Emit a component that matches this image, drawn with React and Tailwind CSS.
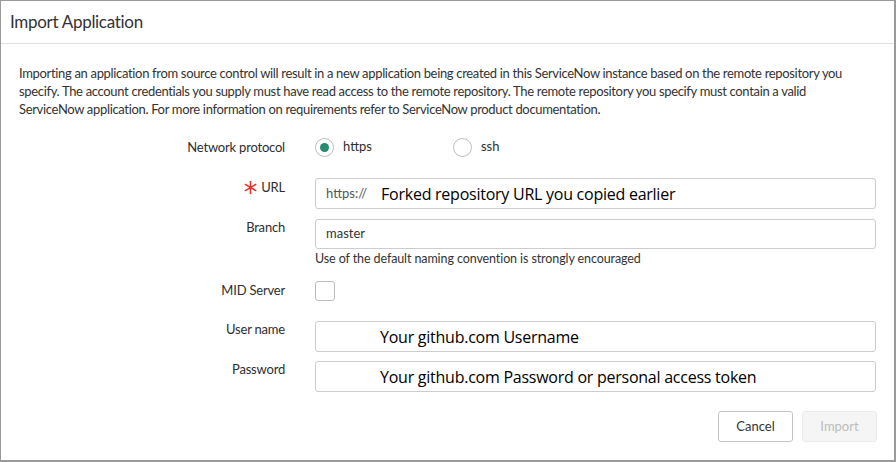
import React from "react";

const Label = ({ children, required }) => (
  <div className="flex justify-end items-center gap-[3px] text-[13px] leading-[17px] tracking-[-0.2px] text-[#2e2e2e]">
    {required && (
      <svg width="13" height="13" viewBox="0 0 12 12" className="mr-[1px]">
        <g stroke="#e4312b" strokeWidth="1.4" strokeLinecap="round">
          <line x1="6" y1="0.5" x2="6" y2="11.5" />
          <line x1="1.2" y1="3.2" x2="10.8" y2="8.8" />
          <line x1="1.2" y1="8.8" x2="10.8" y2="3.2" />
        </g>
      </svg>
    )}
    <span>{children}</span>
  </div>
);

const Radio = ({ checked, label }) => (
  <div className="flex items-center gap-[9px]">
    <span className="w-[19px] h-[19px] rounded-full border border-[#bdbdbd] flex items-center justify-center bg-white">
      {checked && <span className="w-[9px] h-[9px] rounded-full bg-[#278b72]" />}
    </span>
    <span className="text-[13px] text-[#2e2e2e]">{label}</span>
  </div>
);

const overlay = "font-['Open_Sans',sans-serif] text-[16px] tracking-[-0.25px] text-black";

export default function App() {
  return (
    <div className="w-[896px] h-[462px] bg-white border border-[#9a9a9a] border-r-2 border-b-2 font-['Lato',sans-serif] text-[#333] overflow-hidden">
      <div className="h-[43px] border-b border-[#e0e0e0] flex items-center pl-[9px]">
        <h1 className="text-[17px] tracking-[-0.3px] text-[#333]">Import Application</h1>
      </div>

      <p className="pl-[18px] pr-[46px] pt-[20px] text-[13px] leading-[18px] tracking-[-0.33px] text-[#333]">
        Importing an application from source control will result in a new application being created in this ServiceNow instance based on the remote repository you specify. The account credentials you supply must have read access to the remote repository. The remote repository you specify must contain a valid ServiceNow application. For more information on requirements refer to ServiceNow product documentation.
      </p>

      <div className="grid grid-cols-[284px_1fr] gap-x-[30px] pr-[18px] mt-[19px]">
        <div className="h-[20px] flex items-center justify-end">
          <Label>Network protocol</Label>
        </div>
        <div className="flex items-center gap-[81px] h-[20px]">
          <Radio checked label="https" />
          <Radio label="ssh" />
        </div>

        <div className="mt-[21px] pt-[1px]">
          <Label required>URL</Label>
        </div>
        <div className="mt-[21px] h-[31px] border border-[#cccccc] rounded-[3px] flex items-center pl-[10px]">
          <span className="text-[13px] text-[#555]">https://</span>
          <span className={`${overlay} ml-[14px]`}>Forked repository URL you copied earlier</span>
        </div>

        <div className="mt-[10px]">
          <Label>Branch</Label>
        </div>
        <div className="mt-[10px]">
          <div className="h-[30px] border border-[#cccccc] rounded-[3px] flex items-center pl-[10px] text-[13px] text-[#333]">
            master
          </div>
          <div className="text-[12.5px] leading-[17px] tracking-[-0.1px] text-[#333] mt-[1px]">
            Use of the default naming convention is strongly encouraged
          </div>
        </div>

        <div className="mt-[14px] pt-[1px]">
          <Label>MID Server</Label>
        </div>
        <div className="mt-[14px]">
          <div className="w-[20px] h-[20px] border border-[#bdbdbd] rounded-[3px]" />
        </div>

        <div className="mt-[20px]">
          <Label>User name</Label>
        </div>
        <div className={`mt-[20px] h-[31px] border border-[#cccccc] rounded-[3px] flex items-center pl-[64px] ${overlay}`}>
          Your github.com Username
        </div>

        <div className="mt-[9px]">
          <Label>Password</Label>
        </div>
        <div className={`mt-[9px] h-[31px] border border-[#cccccc] rounded-[3px] flex items-center pl-[64px] ${overlay}`}>
          Your github.com Password or personal access token
        </div>
      </div>

      <div className="flex justify-end gap-[9px] pr-[17px] mt-[19px]">
        <button type="button" className="w-[75px] h-[31px] border border-[#c4c4c4] rounded-[3px] bg-white text-[13px] text-[#333]">
          Cancel
        </button>
        <button type="button" className="w-[75px] h-[31px] border border-[#ebebeb] rounded-[3px] bg-[#f5f5f5] text-[13px] text-[#bcbcbc]">
          Import
        </button>
      </div>
    </div>
  );
}
